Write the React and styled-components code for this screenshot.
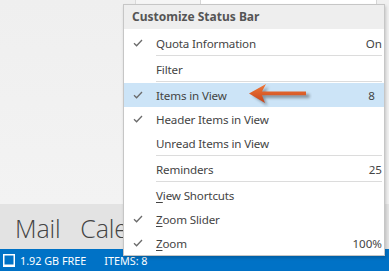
import React from "react";
import styled, { createGlobalStyle } from "styled-components";

const GlobalStyle = createGlobalStyle`
  body {
    margin: 0;
    overflow: hidden;
    font-family: "Noto Sans", "Liberation Sans", sans-serif;
  }
`;

const items = [
  { label: "Quota Information", checked: true, value: "On" },
  { sep: true },
  { label: "Filter" },
  { sep: true },
  { label: "Items in View", checked: true, value: "8", active: true, arrow: true, inset: 7 },
  { label: "Header Items in View", checked: true },
  { label: "Unread Items in View" },
  { sep: true },
  { label: "Reminders", value: "25" },
  { sep: true },
  { label: "View Shortcuts", key: "V" },
  { label: "Zoom Slider", checked: true, key: "Z" },
  { label: "Zoom", checked: true, value: "100%", key: "Z" },
];

const App = () => {
  return (
    <SCREEN>
      <GlobalStyle />
      <MAIN>
        <FolderPane />
        <ListColumn />
        <ReadingPane />
        <ScrollPane />
      </MAIN>
      <NAVBAR>
        <NavItem>Mail</NavItem>
        <NavItem>Calendar</NavItem>
      </NAVBAR>
      <STATUSBAR>
        <StatusIcon viewBox="0 0 12 13">
          <rect x="0.75" y="0.75" width="10.5" height="11" fill="none" stroke="#fff" strokeWidth="1.5" />
          <rect x="0" y="10.5" width="12" height="2.5" fill="#fff" />
        </StatusIcon>
        <StatusText>1.92 GB FREE</StatusText>
        <StatusText>ITEMS: 8</StatusText>
      </STATUSBAR>

      <MENU>
        <MenuHeader>Customize Status Bar</MenuHeader>
        <MenuList>
          {items.map((it, i) =>
            it.sep ? (
              <Separator key={i} />
            ) : (
              <Row key={i} $active={it.active}>
                <Check>{it.checked ? <CheckMark /> : null}</Check>
                <Label>
                  {it.key ? (
                    <>
                      <u>{it.label[0]}</u>
                      {it.label.slice(1)}
                    </>
                  ) : (
                    it.label
                  )}
                </Label>
                <Value $inset={it.inset}>{it.value}</Value>
                {it.arrow ? <Arrow /> : null}
              </Row>
            )
          )}
        </MenuList>
      </MENU>
    </SCREEN>
  );
};

const CheckMark = () => (
  <svg width="10" height="8" viewBox="0 0 10 8">
    <path d="M1 4.2 L3.6 6.8 L9 1" fill="none" stroke="#6b6b6b" strokeWidth="1.3" />
  </svg>
);

const Arrow = () => (
  <ARROWSVG width="64" height="24" viewBox="0 0 64 24">
    <defs>
      <linearGradient id="ag" x1="0" y1="0" x2="0" y2="1">
        <stop offset="0" stopColor="#f07a3a" />
        <stop offset="1" stopColor="#c8441a" />
      </linearGradient>
      <filter id="sh" x="-20%" y="-40%" width="140%" height="180%">
        <feGaussianBlur stdDeviation="1.4" />
      </filter>
    </defs>
    <path
      d="M3 10 L19 1.5 L15 8.5 L60 8.5 L60 12.5 L15 12.5 L18 20.5 Z"
      fill="#000"
      opacity="0.35"
      transform="translate(1.5 2.5)"
      filter="url(#sh)"
    />
    <path d="M1 10.5 L18 1 L14 8.5 L58 8.5 L58 12.2 L14 12.2 L17 20 Z" fill="url(#ag)" />
  </ARROWSVG>
);

const SCREEN = styled.div`
  position: relative;
  width: 389px;
  height: 271px;
  display: flex;
  flex-direction: column;
  overflow: hidden;
  background-color: #f1f1f1;
`;

const MAIN = styled.div`
  display: flex;
  height: 204px;
`;

const FolderPane = styled.div`
  width: 135px;
  background: linear-gradient(#efefef, #f3f3f3);
  border-right: 1px solid #dadada;
`;

const ListColumn = styled.div`
  width: 64px;
  background-color: #f5f5f5;
  border-right: 1px solid #d6d6d6;
`;

const ReadingPane = styled.div`
  flex: 1;
  background-color: #fff;
  border-right: 1px solid #d6d6d6;
`;

const ScrollPane = styled.div`
  width: 12px;
  background-color: #f0f0f0;
`;

const NAVBAR = styled.div`
  height: 45px;
  background-color: #e3e3e3;
  display: flex;
  align-items: center;
  gap: 20px;
  padding-left: 15px;
`;

const NavItem = styled.span`
  font-family: "Open Sans", "Liberation Sans", sans-serif;
  font-weight: 300;
  font-size: 25px;
  color: #444;
  letter-spacing: -0.2px;
  padding-top: 2px;
`;

const STATUSBAR = styled.div`
  height: 22px;
  background-color: #0072c6;
  display: flex;
  align-items: center;
  padding-left: 3px;
  gap: 18px;
`;

const StatusIcon = styled.svg`
  width: 12px;
  height: 13px;
  margin-right: -13px;
`;

const StatusText = styled.span`
  color: #fff;
  font-size: 10.8px;
  padding-top: 1px;
`;

const MENU = styled.div`
  position: absolute;
  left: 123px;
  top: 4px;
  width: 260px;
  background-color: #fff;
  border: 1px solid #c6c6c6;
  box-shadow: 1px 2px 3px rgba(0, 0, 0, 0.18);
  color: #444;
  font-size: 11.2px;
`;

const MenuHeader = styled.div`
  height: 24px;
  line-height: 24px;
  background-color: #eeeeee;
  padding-left: 8px;
  font-weight: bold;
  font-size: 12px;
  color: #555;
`;

const MenuList = styled.div`
  padding-top: 2px;
`;

const Row = styled.div`
  position: relative;
  height: 24px;
  display: flex;
  align-items: center;
  background-color: ${(p) => (p.$active ? "#cce4f7" : "transparent")};
`;

const Check = styled.div`
  width: 23px;
  display: flex;
  padding-left: 9px;
`;

const Label = styled.span`
  flex: 1;
  font-size: 11.6px;
  letter-spacing: -0.15px;
  u {
    text-decoration-thickness: 1px;
    text-underline-offset: 2px;
  }
`;

const Value = styled.span`
  font-size: 11.6px;
  padding-right: ${(p) => (p.$inset ? 2 + p.$inset : 2)}px;
`;

const Separator = styled.div`
  height: 1px;
  background-color: #dcdcdc;
  margin: 0 2px 1px 32px;
`;

const ARROWSVG = styled.svg`
  position: absolute;
  left: 124px;
  top: 0;
`;

export default App;
